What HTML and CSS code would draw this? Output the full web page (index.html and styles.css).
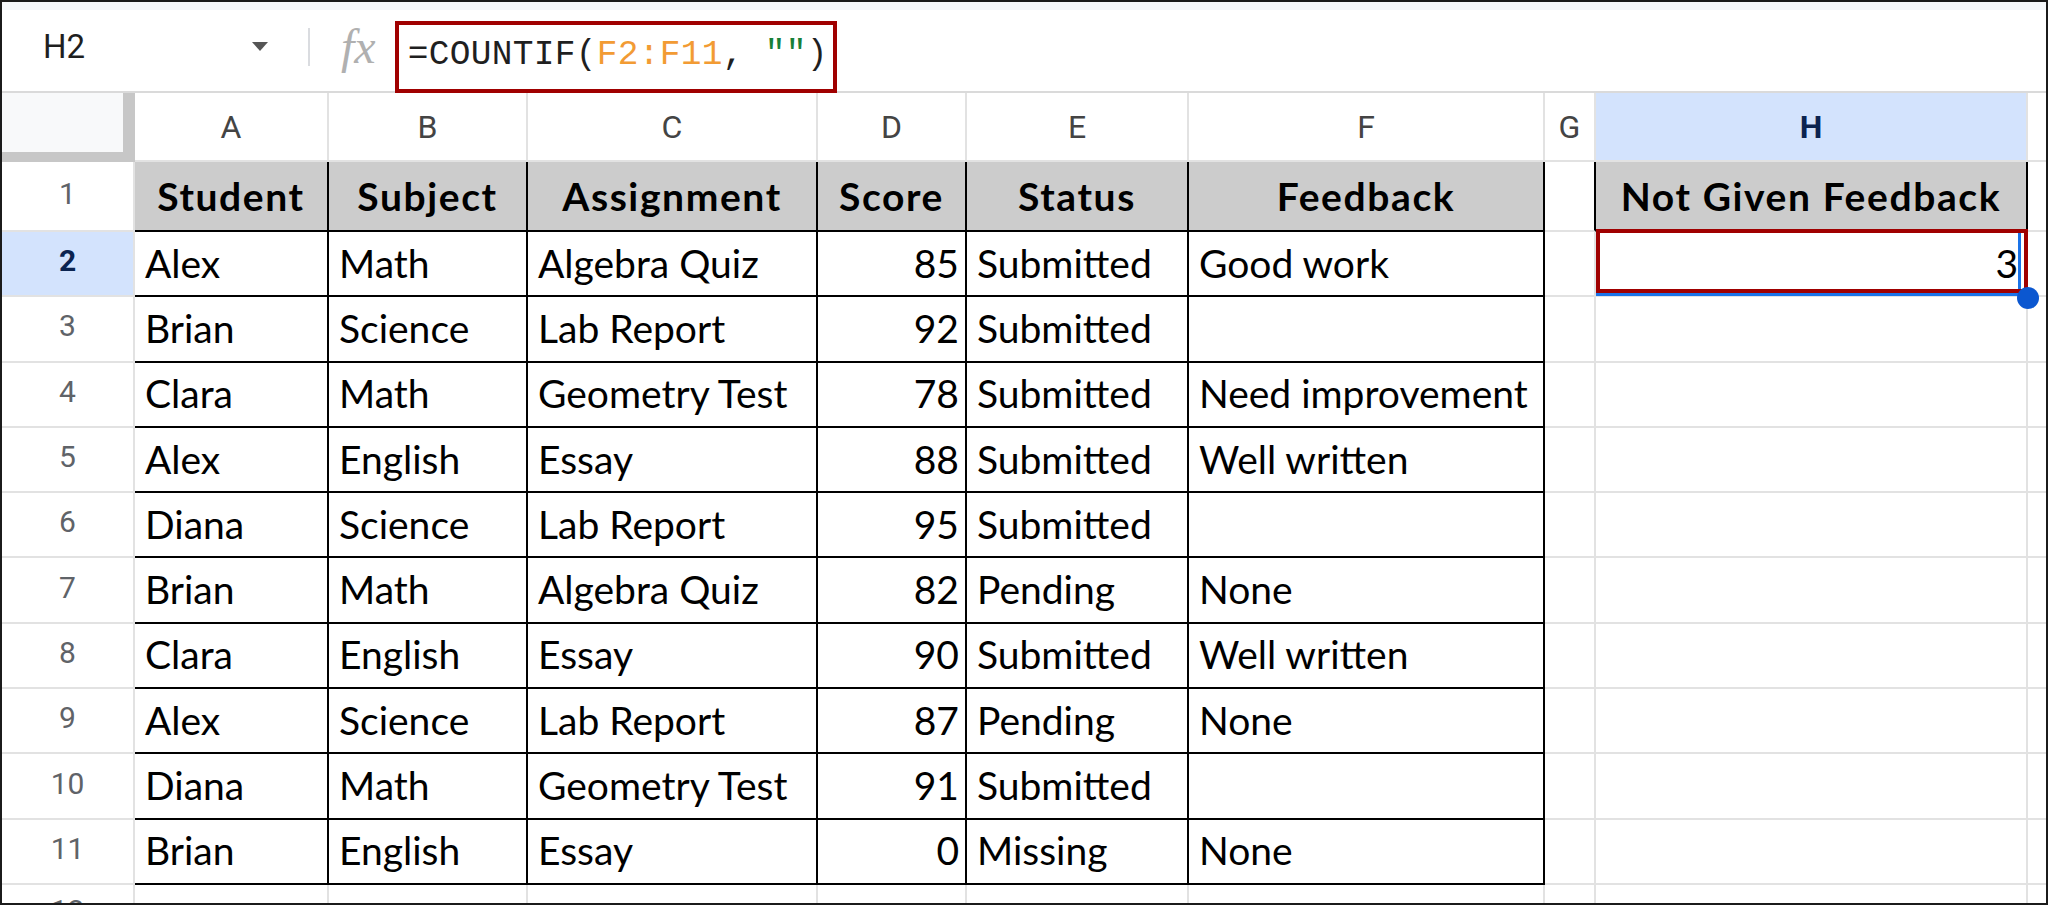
FILE: index.html
```html
<!DOCTYPE html>
<html lang="en">
    <head>
        <meta charset="UTF-8" />
        <title>COUNTIF blank feedback</title>
        <link rel="stylesheet" href="styles.css">
    </head>
    <body>
        <div class="sheet">
            <!-- formula bar -->
            <div class="fbar">
                <div class="namebox">
                    <span>H2</span>
                    <span class="caret"></span>
                </div>
                <span class="sep"></span>
                <span class="fx">fx</span>
                <div class="formula">=COUNTIF(<span class="rng">F2:F11</span>, <span class="str">""</span>)</div>
            </div>

            <!-- grid -->
            <div class="grid">
                <!-- column letters -->
                <div class="c corner"></div>
                <div class="c ch">A</div>
                <div class="c ch">B</div>
                <div class="c ch">C</div>
                <div class="c ch">D</div>
                <div class="c ch">E</div>
                <div class="c ch">F</div>
                <div class="c ch">G</div>
                <div class="c ch active">H</div>
                <div class="c ch"></div>

                <!-- row 1 -->
                <div class="c rh">1</div>
                <div class="c t th">Student</div>
                <div class="c t th">Subject</div>
                <div class="c t th">Assignment</div>
                <div class="c t th">Score</div>
                <div class="c t th">Status</div>
                <div class="c t th">Feedback</div>
                <div class="c gl"></div>
                <div class="c t th">Not Given Feedback</div>
                <div class="c"></div>

                <!-- row 2 -->
                <div class="c rh active">2</div>
                <div class="c t">Alex</div>
                <div class="c t">Math</div>
                <div class="c t">Algebra Quiz</div>
                <div class="c t n">85</div>
                <div class="c t">Submitted</div>
                <div class="c t">Good work</div>
                <div class="c"></div>
                <div class="c n picked">
                    3
                    <span class="cursor"></span>
                    <span class="mark"></span>
                    <span class="handle"></span>
                </div>
                <div class="c"></div>

                <!-- row 3 -->
                <div class="c rh">3</div>
                <div class="c t">Brian</div>
                <div class="c t">Science</div>
                <div class="c t">Lab Report</div>
                <div class="c t n">92</div>
                <div class="c t">Submitted</div>
                <div class="c t"></div>
                <div class="c"></div>
                <div class="c"></div>
                <div class="c"></div>

                <!-- row 4 -->
                <div class="c rh">4</div>
                <div class="c t">Clara</div>
                <div class="c t">Math</div>
                <div class="c t">Geometry Test</div>
                <div class="c t n">78</div>
                <div class="c t">Submitted</div>
                <div class="c t">Need improvement</div>
                <div class="c"></div>
                <div class="c"></div>
                <div class="c"></div>

                <!-- row 5 -->
                <div class="c rh">5</div>
                <div class="c t">Alex</div>
                <div class="c t">English</div>
                <div class="c t">Essay</div>
                <div class="c t n">88</div>
                <div class="c t">Submitted</div>
                <div class="c t">Well written</div>
                <div class="c"></div>
                <div class="c"></div>
                <div class="c"></div>

                <!-- row 6 -->
                <div class="c rh">6</div>
                <div class="c t">Diana</div>
                <div class="c t">Science</div>
                <div class="c t">Lab Report</div>
                <div class="c t n">95</div>
                <div class="c t">Submitted</div>
                <div class="c t"></div>
                <div class="c"></div>
                <div class="c"></div>
                <div class="c"></div>

                <!-- row 7 -->
                <div class="c rh">7</div>
                <div class="c t">Brian</div>
                <div class="c t">Math</div>
                <div class="c t">Algebra Quiz</div>
                <div class="c t n">82</div>
                <div class="c t">Pending</div>
                <div class="c t">None</div>
                <div class="c"></div>
                <div class="c"></div>
                <div class="c"></div>

                <!-- row 8 -->
                <div class="c rh">8</div>
                <div class="c t">Clara</div>
                <div class="c t">English</div>
                <div class="c t">Essay</div>
                <div class="c t n">90</div>
                <div class="c t">Submitted</div>
                <div class="c t">Well written</div>
                <div class="c"></div>
                <div class="c"></div>
                <div class="c"></div>

                <!-- row 9 -->
                <div class="c rh">9</div>
                <div class="c t">Alex</div>
                <div class="c t">Science</div>
                <div class="c t">Lab Report</div>
                <div class="c t n">87</div>
                <div class="c t">Pending</div>
                <div class="c t">None</div>
                <div class="c"></div>
                <div class="c"></div>
                <div class="c"></div>

                <!-- row 10 -->
                <div class="c rh">10</div>
                <div class="c t">Diana</div>
                <div class="c t">Math</div>
                <div class="c t">Geometry Test</div>
                <div class="c t n">91</div>
                <div class="c t">Submitted</div>
                <div class="c t"></div>
                <div class="c"></div>
                <div class="c"></div>
                <div class="c"></div>

                <!-- row 11 -->
                <div class="c rh">11</div>
                <div class="c t">Brian</div>
                <div class="c t">English</div>
                <div class="c t">Essay</div>
                <div class="c t n">0</div>
                <div class="c t">Missing</div>
                <div class="c t">None</div>
                <div class="c"></div>
                <div class="c"></div>
                <div class="c"></div>

                <!-- row 12 (cut off) -->
                <div class="c rh">12</div>
                <div class="c"></div>
                <div class="c"></div>
                <div class="c"></div>
                <div class="c"></div>
                <div class="c"></div>
                <div class="c"></div>
                <div class="c"></div>
                <div class="c"></div>
                <div class="c"></div>
            </div>
        </div>
    </body>
</html>
```

FILE: styles.css
```css
body {
    margin: 0;
    background-color: #fff;
}

.sheet {
    width: 2048px;
    height: 905px;
    box-sizing: border-box;
    border: 2px solid #1b1b1b;
    overflow: hidden;
    font-family: Lato, sans-serif;
}

/* formula bar */
.fbar {
    height: 89px;
    display: flex;
    align-items: center;
    border-bottom: 2px solid #dadada;
    background: linear-gradient(#f6f8fb 0 8px, #fff 8px);
}

.namebox {
    width: 298px;
    box-sizing: border-box;
    padding-left: 41px;
    padding-right: 32px;
    display: flex;
    align-items: center;
    justify-content: space-between;
    font-family: Roboto, sans-serif;
    font-size: 33px;
    color: #1f1f1f;
}

.caret {
    width: 0;
    height: 0;
    border-left: 8px solid transparent;
    border-right: 8px solid transparent;
    border-top: 9px solid #555;
}

.sep {
    width: 2px;
    height: 38px;
    margin-left: 8px;
    background-color: #dadce0;
}

.fx {
    margin-left: 31px;
    font-family: "Liberation Serif", serif;
    font-style: italic;
    font-size: 48px;
    color: #b0b0b0;
}

.formula {
    align-self: flex-end;
    position: relative;
    z-index: 1;
    margin-left: 19px;
    margin-bottom: -2px;
    width: 442px;
    height: 72px;
    box-sizing: border-box;
    border: 4px solid #a00000;
    padding: 0 0 6px 9px;
    display: flex;
    align-items: center;
    font-family: "Liberation Mono", monospace;
    font-size: 34.5px;
    letter-spacing: 0.3px;
    color: #1f1f1f;
    white-space: pre;
}

.rng {
    color: #f29b34;
}

.str {
    color: #188038;
}

/* grid */
.grid {
    display: grid;
    grid-template-columns: 133px 194px 199px 290px 149px 222px 356px 51px 432px 1fr;
    grid-template-rows: 69px 70px repeat(10, 65.3px) 60px;
}

.c {
    position: relative;
    box-sizing: border-box;
    border-right: 2px solid #e2e2e2;
    border-bottom: 2px solid #e2e2e2;
    display: flex;
    align-items: center;
    padding: 0 10px 2px;
    font-size: 39px;
    color: #000;
    white-space: nowrap;
}

.corner {
    background-color: #f8f9fa;
    border-right: 12px solid #c7c7c7;
    border-bottom: 10px solid #c7c7c7;
}

.ch {
    justify-content: center;
    padding: 0;
    font-family: Roboto, sans-serif;
    font-size: 32px;
    color: #444;
}

.rh {
    justify-content: center;
    padding: 0 0 6px;
    font-family: Roboto, sans-serif;
    font-size: 30px;
    color: #5f6368;
}

.ch.active,
.rh.active {
    background-color: #d3e3fd;
    color: #0b2350;
    font-weight: bold;
}

.t {
    border-right-color: #000;
    border-bottom-color: #000;
}

.th {
    justify-content: center;
    padding-top: 2px;
    background-color: #cccccc;
    font-weight: bold;
    letter-spacing: 1.6px;
}

.gl {
    border-right-color: #000;
}

.n {
    justify-content: flex-end;
    padding-right: 6px;
}

/* selected H2 */
.picked {
    padding-right: 8px;
}

.cursor {
    position: absolute;
    left: 0;
    top: -2px;
    right: 5px;
    bottom: -1px;
    border: 3px solid #1a73e8;
}

.mark {
    position: absolute;
    left: 0;
    top: -3px;
    right: -2px;
    bottom: 2px;
    border: 4px solid #a00000;
}

.handle {
    position: absolute;
    right: -13px;
    bottom: -14px;
    width: 22px;
    height: 22px;
    border-radius: 50%;
    background-color: #0b57d0;
    z-index: 2;
}
```
